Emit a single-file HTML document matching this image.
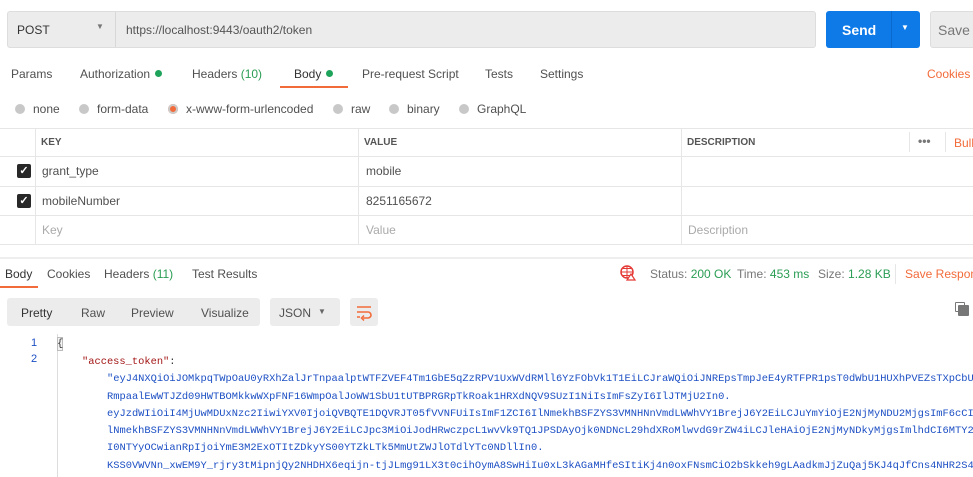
<!DOCTYPE html>
<html><head><meta charset="utf-8"><style>
*{margin:0;padding:0;box-sizing:border-box}
body{width:973px;height:477px;overflow:hidden;background:#fff;font-family:"Liberation Sans",sans-serif;font-size:12px;color:#505050;position:relative}
.a{position:absolute;white-space:nowrap}
.g{color:#2a9d54}
.o{color:#f26b3a}
.dot{display:inline-block;width:7px;height:7px;border-radius:50%;background:#1ea35a;margin-left:5px;vertical-align:1px}
.rad{display:inline-block;width:10px;height:10px;border-radius:50%;background:#c8c8c8;margin-right:8px;vertical-align:-1px}
.hl{position:absolute;height:1px;background:#e6e6e6}
.vl{position:absolute;width:1px;background:#e6e6e6}
.cb{position:absolute;width:14px;height:14px;background:#282828;border-radius:2px;color:#fff;font-size:11px;line-height:14px;text-align:center;font-weight:bold}
.code{font-family:"Liberation Mono",monospace;font-size:10.4px;line-height:14px;color:#1c4fc4;position:absolute;left:107px;white-space:nowrap}
</style></head><body>
<div class="a" style="left:7px;top:11px;width:809px;height:37px;background:#ececec;border:1px solid #ddd;border-radius:3px"></div>
<div class="vl" style="left:115px;top:12px;height:35px;background:#d8d8d8"></div>
<div class="a" style="left:17px;top:23px;color:#333">POST</div>
<div class="a" style="left:96px;top:22px;font-size:8px;color:#777">▼</div>
<div class="a" style="left:126px;top:23px;color:#555">https://localhost:9443/oauth2/token</div>
<div class="a" style="left:826px;top:11px;width:94px;height:37px;background:#0d7ae8;border-radius:3px"></div>
<div class="vl" style="left:891px;top:11px;height:37px;background:#0a69cc"></div>
<div class="a" style="left:842px;top:22px;color:#fff;font-weight:bold;font-size:14px">Send</div>
<div class="a" style="left:901px;top:23px;color:#fff;font-size:8px">▼</div>
<div class="a" style="left:930px;top:11px;width:50px;height:37px;background:#ececec;border-radius:3px;border:1px solid #ddd"></div>
<div class="a" style="left:938px;top:22px;color:#777;font-size:14px">Save</div>

<div class="a" style="top:67px;left:11px">Params</div>
<div class="a" style="top:67px;left:80px">Authorization<span class="dot"></span></div>
<div class="a" style="top:67px;left:192px">Headers <span class="g">(10)</span></div>
<div class="a" style="top:67px;left:294px;color:#333">Body<span class="dot"></span></div>
<div class="a" style="left:280px;top:86px;width:68px;height:2px;background:#f26b3a"></div>
<div class="a" style="top:67px;left:362px">Pre-request Script</div>
<div class="a" style="top:67px;left:485px">Tests</div>
<div class="a" style="top:67px;left:540px">Settings</div>
<div class="a o" style="top:67px;left:927px">Cookies</div>

<div class="a" style="top:102px;left:15px"><span class="rad"></span>none</div>
<div class="a" style="top:102px;left:79px"><span class="rad"></span>form-data</div>
<div class="a" style="top:102px;left:168px"><span class="rad" style="background:#f26b3a;box-shadow:0 0 0 2px #ccc inset"></span>x-www-form-urlencoded</div>
<div class="a" style="top:102px;left:333px"><span class="rad"></span>raw</div>
<div class="a" style="top:102px;left:389px"><span class="rad"></span>binary</div>
<div class="a" style="top:102px;left:459px"><span class="rad"></span>GraphQL</div>

<div class="hl" style="left:0;top:128px;width:973px"></div>
<div class="hl" style="left:0;top:156px;width:973px"></div>
<div class="hl" style="left:0;top:186px;width:973px"></div>
<div class="hl" style="left:0;top:215px;width:973px"></div>
<div class="hl" style="left:0;top:244px;width:973px"></div>
<div class="vl" style="left:35px;top:128px;height:116px"></div>
<div class="vl" style="left:358px;top:128px;height:116px"></div>
<div class="vl" style="left:681px;top:128px;height:116px"></div>
<div class="vl" style="left:909px;top:132px;height:20px"></div>
<div class="vl" style="left:945px;top:132px;height:20px"></div>
<div class="a" style="left:41px;top:137px;font-size:10px;font-weight:bold;color:#555">KEY</div>
<div class="a" style="left:364px;top:137px;font-size:10px;font-weight:bold;color:#555">VALUE</div>
<div class="a" style="left:687px;top:137px;font-size:10px;font-weight:bold;color:#555">DESCRIPTION</div>
<div class="a" style="left:918px;top:134px;color:#777;font-weight:bold">•••</div>
<div class="a o" style="left:954px;top:136px">Bulk</div>
<div class="cb" style="left:17px;top:164px">✓</div>
<div class="cb" style="left:17px;top:194px">✓</div>
<div class="a" style="left:42px;top:164px">grant_type</div>
<div class="a" style="left:366px;top:164px">mobile</div>
<div class="a" style="left:42px;top:194px">mobileNumber</div>
<div class="a" style="left:366px;top:194px">8251165672</div>
<div class="a" style="left:42px;top:223px;color:#aaa">Key</div>
<div class="a" style="left:366px;top:223px;color:#aaa">Value</div>
<div class="a" style="left:688px;top:223px;color:#aaa">Description</div>

<div class="hl" style="left:0;top:257px;width:973px;height:2px;background:#eee"></div>
<div class="a" style="left:5px;top:267px;color:#333">Body</div>
<div class="a" style="left:0;top:286px;width:38px;height:2px;background:#f26b3a"></div>
<div class="a" style="left:47px;top:267px">Cookies</div>
<div class="a" style="left:104px;top:267px">Headers <span class="g">(11)</span></div>
<div class="a" style="left:192px;top:267px">Test Results</div>
<svg class="a" style="left:620px;top:265px" width="16" height="16" viewBox="0 0 16 16"><circle cx="7" cy="7" r="6" fill="none" stroke="#e53935" stroke-width="1.5"/><path d="M1 7h12M7 1v12M3 3.5h8M3 10.5h8" stroke="#e53935" stroke-width="1"/><path d="M11 9l4 6h-8z" fill="#fff" stroke="#e53935" stroke-width="1.2"/></svg>
<div class="a" style="left:650px;top:267px;color:#777">Status: <span class="g">200 OK</span></div>
<div class="a" style="left:737px;top:267px;color:#777">Time: <span class="g">453 ms</span></div>
<div class="a" style="left:818px;top:267px;color:#777">Size: <span class="g">1.28 KB</span></div>
<div class="vl" style="left:895px;top:264px;height:20px"></div>
<div class="a o" style="left:905px;top:267px">Save Response</div>

<div class="a" style="left:7px;top:298px;width:253px;height:28px;background:#ececec;border-radius:3px"></div>
<div class="a" style="left:21px;top:306px;color:#333">Pretty</div>
<div class="a" style="left:81px;top:306px">Raw</div>
<div class="a" style="left:131px;top:306px">Preview</div>
<div class="a" style="left:201px;top:306px">Visualize</div>
<div class="a" style="left:270px;top:298px;width:70px;height:28px;background:#ececec;border-radius:3px"></div>
<div class="a" style="left:279px;top:306px">JSON</div>
<div class="a" style="left:318px;top:307px;font-size:8px;color:#666">▼</div>
<div class="a" style="left:350px;top:298px;width:28px;height:28px;background:#ececec;border-radius:3px"></div>
<svg class="a" style="left:355px;top:303px" width="18" height="18" viewBox="0 0 18 18"><path d="M2 4h14M2 9h11a3 3 0 0 1 0 6H8M2 14h3" stroke="#f26b3a" stroke-width="1.6" fill="none"/><path d="M9 12.5l-2.5 2.5 2.5 2.5" stroke="#f26b3a" stroke-width="1.5" fill="none"/></svg>
<div class="a" style="left:955px;top:302px;width:10px;height:10px;border:1.5px solid #777;border-radius:1px"></div>
<div class="a" style="left:958px;top:305px;width:11px;height:11px;background:#777;border-radius:1px"></div>

<div class="a" style="left:31px;top:337px;color:#1c4fc4;font-size:11px">1</div>
<div class="a" style="left:31px;top:353px;color:#1c4fc4;font-size:11px">2</div>
<div class="vl" style="left:57px;top:334px;height:143px;background:#ddd"></div>
<div class="a" style="left:57px;top:337px;width:6px;height:14px;border:1px solid #bbb;background:#f3f3f3"></div>
<div class="code" style="left:57px;top:337px;color:#333">{</div>
<div class="code" style="left:82px;top:355px;color:#a31515">"access_token"<span style="color:#333">:</span></div>
<div class="code" style="top:372px">"eyJ4NXQiOiJOMkpqTWpOaU0yRXhZalJrTnpaalptWTFZVEF4Tm1GbE5qZzRPV1UxWVdRMll6YzFObVk1T1EiLCJraWQiOiJNREpsTmpJeE4yRTFPR1psT0dWbU1HUXhPVEZsTXpCbU</div>
<div class="code" style="top:390px">RmpaalEwWTJZd09HWTBOMkkwWXpFNF16WmpOalJoWW1SbU1tUTBPRGRpTkRoak1HRXdNQV9SUzI1NiIsImFsZyI6IlJTMjU2In0.</div>
<div class="code" style="top:407px">eyJzdWIiOiI4MjUwMDUxNzc2IiwiYXV0IjoiQVBQTE1DQVRJT05fVVNFUiIsImF1ZCI6IlNmekhBSFZYS3VMNHNnVmdLWWhVY1BrejJ6Y2EiLCJuYmYiOjE2NjMyNDU2MjgsImF6cCI</div>
<div class="code" style="top:424px">lNmekhBSFZYS3VMNHNnVmdLWWhVY1BrejJ6Y2EiLCJpc3MiOiJodHRwczpcL1wvVk9TQ1JPSDAyOjk0NDNcL29hdXRoMlwvdG9rZW4iLCJleHAiOjE2NjMyNDkyMjgsImlhdCI6MTY2</div>
<div class="code" style="top:441px">I0NTYyOCwianRpIjoiYmE3M2ExOTItZDkyYS00YTZkLTk5MmUtZWJlOTdlYTc0NDllIn0.</div>
<div class="code" style="top:459px">KSS0VWVNn_xwEM9Y_rjry3tMipnjQy2NHDHX6eqijn-tjJLmg91LX3t0cihOymA8SwHiIu0xL3kAGaMHfeSItiKj4n0oxFNsmCiO2bSkkeh9gLAadkmJjZuQaj5KJ4qJfCns4NHR2S4</div>
</body></html>
